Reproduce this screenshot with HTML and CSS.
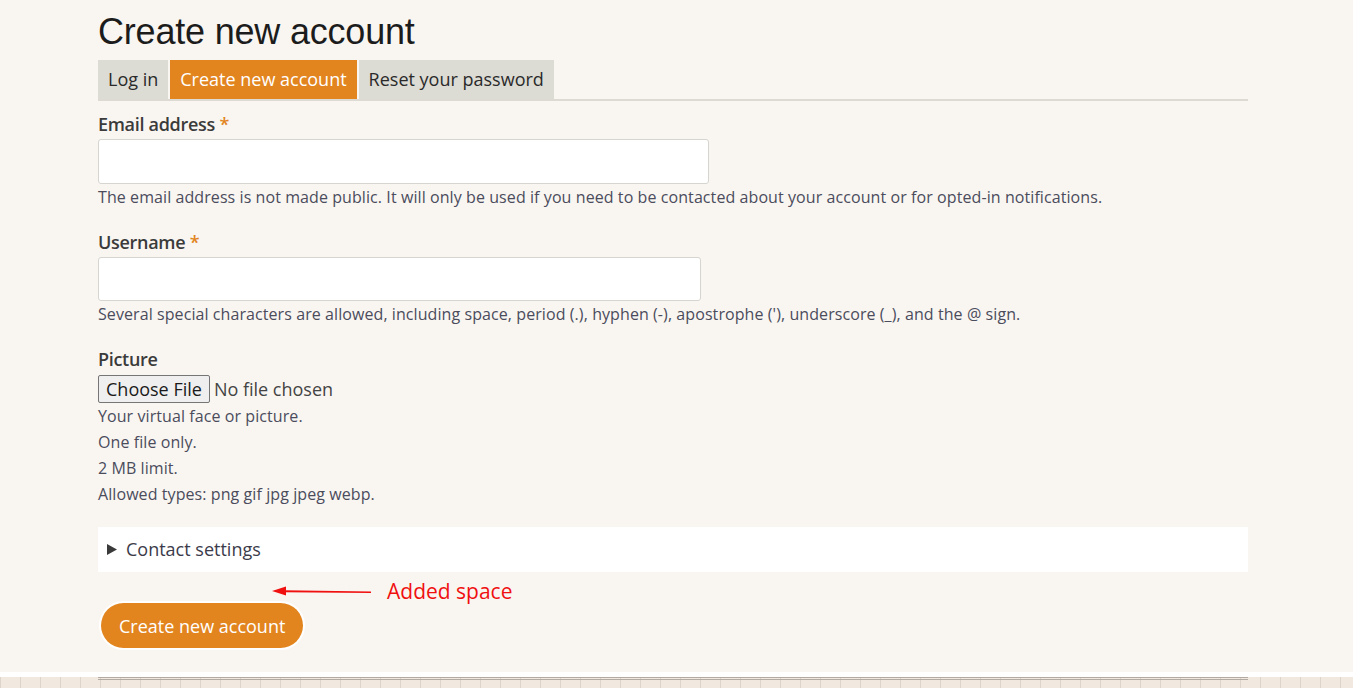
FILE: index.html
```html
<!DOCTYPE html>
<html lang="en">
<head>
<meta charset="utf-8">
<title>Create new account</title>
<link rel="stylesheet" href="styles.css">
</head>
<body>
<div class="page">
  <main class="main">
    <h1 class="title">Create new account</h1>
    <nav class="tabs">
      <a class="tab" href="#">Log in</a>
      <a class="tab tab--active" href="#">Create new account</a>
      <a class="tab" href="#">Reset your password</a>
    </nav>
    <form class="form">
      <div class="item">
        <label class="label">Email address <span class="req">*</span></label>
        <input class="text-input text-input--email" type="text">
        <div class="desc">The email address is not made public. It will only be used if you need to be contacted about your account or for opted-in notifications.</div>
      </div>
      <div class="item">
        <label class="label">Username <span class="req">*</span></label>
        <input class="text-input text-input--user" type="text">
        <div class="desc">Several special characters are allowed, including space, period (.), hyphen (-), apostrophe ('), underscore (_), and the @ sign.</div>
      </div>
      <div class="item">
        <label class="label">Picture</label>
        <div class="file-row"><input class="file-input" type="file"></div>
        <div class="desc desc--list">Your virtual face or picture.<br>One file only.<br>2 MB limit.<br>Allowed types: png gif jpg jpeg webp.</div>
      </div>
      <details class="details">
        <summary class="summary"><svg class="tri" width="10" height="11" viewBox="0 0 10 11"><path d="M0 0 L10 5.5 L0 11 Z" fill="#3a3a3a"/></svg><span>Contact settings</span></summary>
      </details>
      <div class="actions">
        <button class="btn" type="button">Create new account</button>
        <div class="note">
          <svg class="note-arrow" width="100" height="12" viewBox="0 0 100 12"><path d="M12 5.2 L99 6.4 L99 8 L12 7.2 Z" fill="#f01010"/><path d="M0 6 L14 1.5 L14 10.5 Z" fill="#f01010"/></svg>
          <span class="note-text">Added space</span>
        </div>
      </div>
    </form>
  </main>
  <footer class="footer"><div class="footer-line"></div></footer>
</div>
</body>
</html>
```

FILE: styles.css
```css
html, body {
  margin: 0;
  padding: 0;
  height: 100%;
}
body {
  background: #f9f6f2;
  font-family: "Open Sans", "Liberation Sans", sans-serif;
  color: #3a3a3a;
  overflow: hidden;
}
.page {
  display: flex;
  flex-direction: column;
  height: 688px;
}
.main {
  width: 1150px;
  margin-left: 98px;
  padding-top: 10px;
  height: 662px;
  flex: none;
}
.title {
  margin: 0 0 6px 0;
  font-family: "Liberation Sans", Arial, sans-serif;
  font-weight: 400;
  font-size: 36px;
  line-height: 44px;
  letter-spacing: -0.2px;
  color: #1c1c1c;
}
.tabs {
  display: flex;
  gap: 2px;
  border-bottom: 2px solid #dcdad3;
}
.tab {
  display: block;
  padding: 6px 10px;
  font-size: 18px;
  line-height: 27px;
  color: #2a2a2a;
  background: #dcdbd4;
  text-decoration: none;
}
.tab--active {
  background: #e2851f;
  color: #ffffff;
}
.form {
  padding-top: 10px;
}
.item {
  margin-bottom: 20px;
}
.label {
  display: block;
  font-size: 18px;
  font-weight: 600;
  line-height: 27px;
  letter-spacing: -0.3px;
  color: #3b3b3b;
  margin-bottom: 1px;
}
.req {
  color: #e2851f;
}
.text-input {
  display: block;
  box-sizing: border-box;
  background: #ffffff;
  border: 1px solid #d6d5d0;
  border-radius: 3px;
  margin: 0;
  padding: 0 10px;
  font-family: inherit;
  font-size: 16px;
}
.text-input--email {
  width: 611px;
  height: 45px;
}
.text-input--user {
  width: 603px;
  height: 44px;
}
.desc {
  font-size: 16px;
  line-height: 24px;
  letter-spacing: 0.08px;
  color: #4b4c5c;
  margin-top: 1px;
}
.desc--list {
  line-height: 26px;
  margin-top: 0;
}
.file-row {
  height: 29px;
  display: flex;
  align-items: center;
}
.file-input {
  font-family: "Open Sans", sans-serif;
  font-size: 18px;
  color: #444;
  margin: 0;
}
.file-input::file-selector-button {
  font-family: "Open Sans", sans-serif;
  font-size: 18px;
  color: #1a1a1a;
  background: #efefef;
  border: 1px solid #767676;
  border-radius: 2px;
  padding: 0 7px;
  height: 28px;
  margin-right: 4px;
}
.details {
  background: #ffffff;
  margin-top: 1px;
}
.summary {
  display: flex;
  align-items: center;
  height: 45px;
  padding-left: 9px;
  padding-bottom: 1px;
  box-sizing: border-box;
  list-style: none;
  font-size: 18px;
  color: #3b3b4a;
  cursor: pointer;
}
.summary::-webkit-details-marker {
  display: none;
}
.tri {
  margin-right: 9px;
}
.actions {
  position: relative;
  padding-top: 31px;
  padding-left: 3px;
}
.btn {
  display: block;
  height: 45px;
  padding: 0 18px;
  border: none;
  border-radius: 23px;
  background: #e2851f;
  color: #ffffff;
  font-family: "Open Sans", sans-serif;
  font-size: 18px;
  box-shadow: 0 0 0 2px #ffffff;
}
.note {
  position: absolute;
  left: 174px;
  top: 5px;
  display: flex;
  align-items: center;
}
.note-arrow {
  margin-right: 15px;
}
.note-text {
  font-family: "Open Sans", sans-serif;
  font-size: 21px;
  color: #f01010;
}
.footer {
  flex: 1;
  border-top: 5px solid #ffffff;
  background-color: #f1e8df;
  background-image: repeating-linear-gradient(90deg, #ddd4cb 0, #ddd4cb 1px, transparent 1px, transparent 20px);
}
.footer-line {
  margin-left: 98px;
  width: 1150px;
  height: 1px;
  border-top: 1px solid #b3aba3;
  border-bottom: 1px solid #b3aba3;
}
```
